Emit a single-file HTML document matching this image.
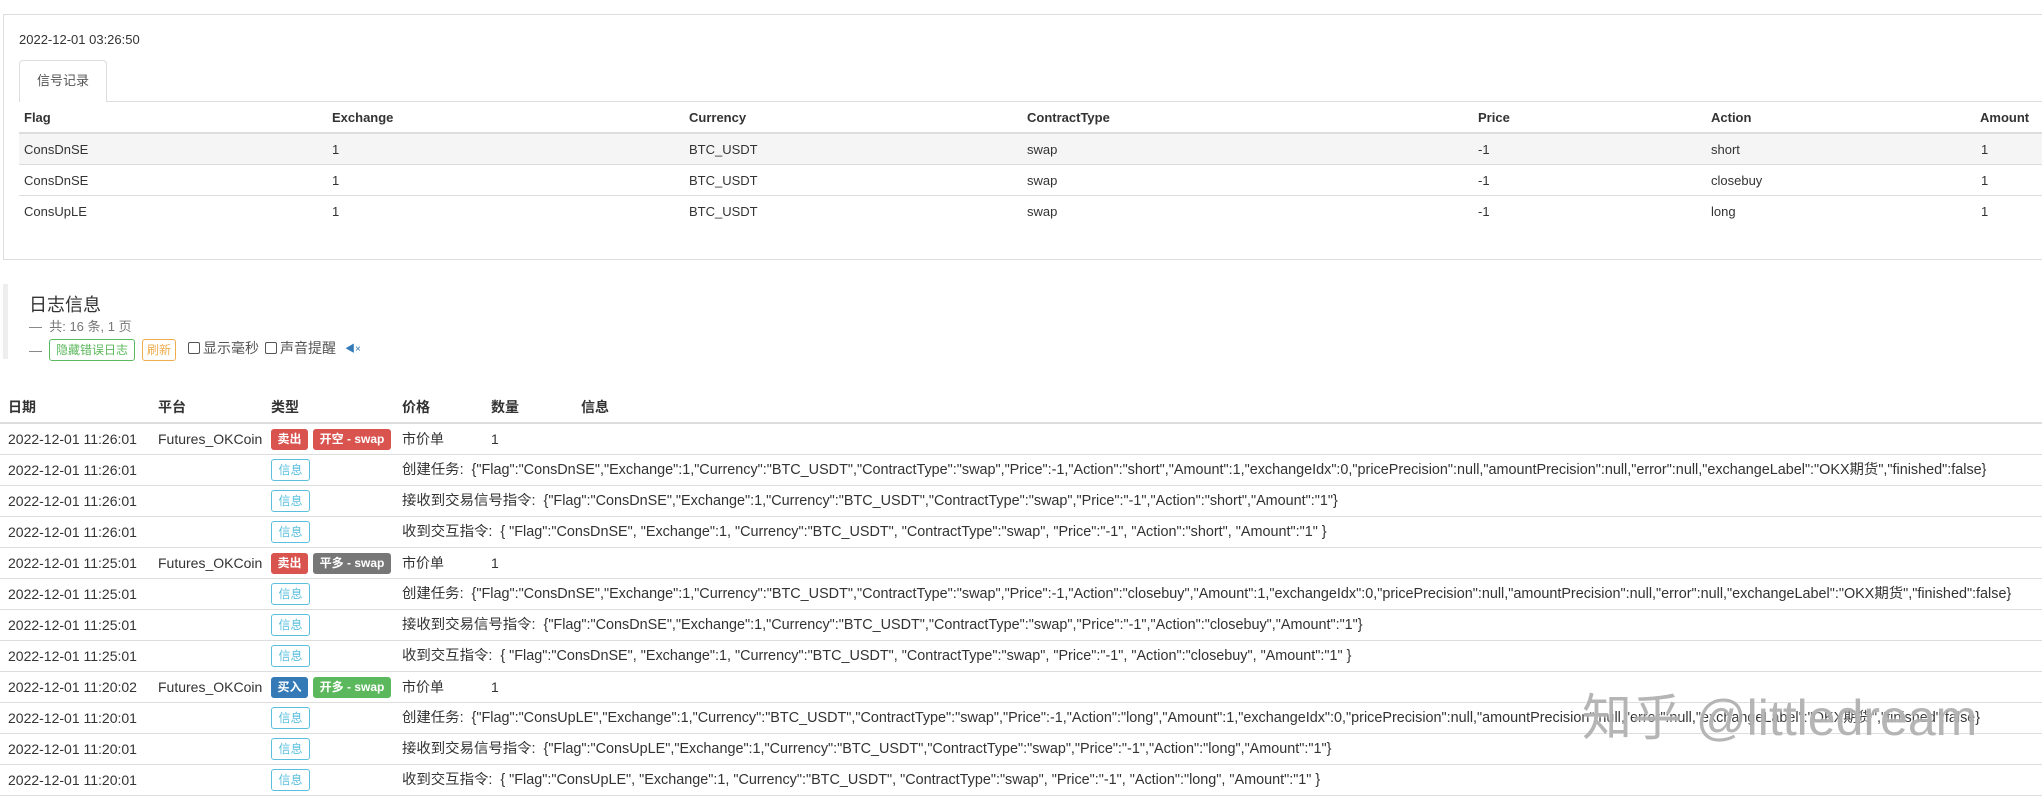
<!DOCTYPE html>
<html><head><meta charset="utf-8"><style>
*{box-sizing:border-box;margin:0;padding:0}
body{width:2042px;height:796px;background:#fff;font-family:"Liberation Sans","Noto Sans CJK SC",sans-serif;font-size:13px;color:#333;position:relative;overflow:hidden}
.abs{position:absolute;white-space:nowrap;line-height:17px}
.lg{font-size:14px}
.msg{font-size:14.4px}
.panel{position:absolute;left:3px;top:14px;width:2045px;height:246px;border:1px solid #ddd;border-right:none}
.tab{position:absolute;left:19px;top:60px;width:88px;height:42px;border:1px solid #ddd;border-bottom:none;border-radius:4px 4px 0 0;background:#fff;color:#555;font-size:13px;text-align:center;line-height:40px}
.hl{position:absolute;height:1px;background:#ddd}
.b{font-weight:bold}
.lbl{position:absolute;height:21px;line-height:21px;border-radius:3px;color:#fff;font-weight:bold;font-size:12px;text-align:center}
.info{position:absolute;height:22px;line-height:20px;border:1px solid #5bc0de;border-radius:3px;color:#5bc0de;font-size:12px;text-align:center;width:39px;left:271px}
</style></head><body>
<div class="panel"></div>
<div class="abs" style="left:19px;top:31px">2022-12-01 03:26:50</div>
<div class="hl" style="left:19px;top:101px;width:2023px"></div>
<div class="tab">信号记录</div>
<div class="abs b" style="left:24px;top:109px">Flag</div>
<div class="abs b" style="left:332px;top:109px">Exchange</div>
<div class="abs b" style="left:689px;top:109px">Currency</div>
<div class="abs b" style="left:1027px;top:109px">ContractType</div>
<div class="abs b" style="left:1478px;top:109px">Price</div>
<div class="abs b" style="left:1711px;top:109px">Action</div>
<div class="abs b" style="left:1980px;top:109px">Amount</div>
<div style="position:absolute;left:19px;top:132px;width:2023px;height:32px;background:#f5f5f5;border-top:2px solid #ddd"></div>
<div class="hl" style="left:19px;top:164px;width:2023px"></div>
<div class="hl" style="left:19px;top:195px;width:2023px"></div>
<div class="abs" style="left:24px;top:141px">ConsDnSE</div><div class="abs" style="left:332px;top:141px">1</div><div class="abs" style="left:689px;top:141px">BTC_USDT</div><div class="abs" style="left:1027px;top:141px">swap</div><div class="abs" style="left:1478px;top:141px">-1</div><div class="abs" style="left:1711px;top:141px">short</div><div class="abs" style="left:1981px;top:141px">1</div>
<div class="abs" style="left:24px;top:172px">ConsDnSE</div><div class="abs" style="left:332px;top:172px">1</div><div class="abs" style="left:689px;top:172px">BTC_USDT</div><div class="abs" style="left:1027px;top:172px">swap</div><div class="abs" style="left:1478px;top:172px">-1</div><div class="abs" style="left:1711px;top:172px">closebuy</div><div class="abs" style="left:1981px;top:172px">1</div>
<div class="abs" style="left:24px;top:203px">ConsUpLE</div><div class="abs" style="left:332px;top:203px">1</div><div class="abs" style="left:689px;top:203px">BTC_USDT</div><div class="abs" style="left:1027px;top:203px">swap</div><div class="abs" style="left:1478px;top:203px">-1</div><div class="abs" style="left:1711px;top:203px">long</div><div class="abs" style="left:1981px;top:203px">1</div>

<div style="position:absolute;left:3px;top:284px;width:5px;height:75px;background:#eee"></div>
<div class="abs" style="left:29px;top:294px;font-size:18px;line-height:22px;color:#333">日志信息</div>
<div class="abs" style="left:29px;top:318px;color:#777">—&nbsp; 共: 16 条, 1 页</div>
<div class="abs" style="left:29px;top:342px;color:#777">—</div>
<div class="abs" style="left:49px;top:339px;height:22px;line-height:20px;border:1px solid #5cb85c;border-radius:3px;color:#5cb85c;font-size:12px;padding:0 6px">隐藏错误日志</div>
<div class="abs" style="left:142px;top:339px;height:22px;line-height:20px;border:1px solid #f0ad4e;border-radius:3px;color:#f0ad4e;font-size:12px;padding:0 4px">刷新</div>
<div class="abs" style="left:188px;top:342px;width:12px;height:12px;border:1px solid #555;border-radius:2px"></div>
<div class="abs" style="left:203px;top:340px;color:#555;font-size:14px">显示毫秒</div>
<div class="abs" style="left:265px;top:342px;width:12px;height:12px;border:1px solid #555;border-radius:2px"></div>
<div class="abs" style="left:280px;top:340px;color:#555;font-size:14px">声音提醒</div>
<div class="abs" style="left:345px;top:341px;color:#337ab7;font-size:10px">◀×</div>

<div class="abs b lg" style="left:8px;top:399px">日期</div>
<div class="abs b lg" style="left:158px;top:399px">平台</div>
<div class="abs b lg" style="left:271px;top:399px">类型</div>
<div class="abs b lg" style="left:402px;top:399px">价格</div>
<div class="abs b lg" style="left:491px;top:399px">数量</div>
<div class="abs b lg" style="left:581px;top:399px">信息</div>
<div style="position:absolute;left:0;top:422px;width:2042px;height:2px;background:#ddd"></div>

<div class="hl" style="left:0;top:454px;width:2042px"></div><div class="hl" style="left:0;top:485px;width:2042px"></div><div class="hl" style="left:0;top:516px;width:2042px"></div><div class="hl" style="left:0;top:547px;width:2042px"></div><div class="hl" style="left:0;top:578px;width:2042px"></div><div class="hl" style="left:0;top:609px;width:2042px"></div><div class="hl" style="left:0;top:640px;width:2042px"></div><div class="hl" style="left:0;top:671px;width:2042px"></div><div class="hl" style="left:0;top:702px;width:2042px"></div><div class="hl" style="left:0;top:733px;width:2042px"></div><div class="hl" style="left:0;top:764px;width:2042px"></div><div class="hl" style="left:0;top:795px;width:2042px"></div>

<div class="abs lg" style="left:8px;top:431px">2022-12-01 11:26:01</div><div class="abs lg" style="left:158px;top:431px">Futures_OKCoin</div>
<div class="lbl" style="left:271px;top:429px;width:37px;background:#d9534f">卖出</div><div class="lbl" style="left:313px;top:429px;width:78px;background:#d9534f">开空 - swap</div>
<div class="abs lg" style="left:402px;top:431px">市价单</div><div class="abs lg" style="left:491px;top:431px">1</div>
<div class="abs lg" style="left:8px;top:462px">2022-12-01 11:26:01</div><div class="info" style="top:459px">信息</div>
<div class="abs msg" style="left:402px;top:462px">创建任务:&nbsp; {"Flag":"ConsDnSE","Exchange":1,"Currency":"BTC_USDT","ContractType":"swap","Price":-1,"Action":"short","Amount":1,"exchangeIdx":0,"pricePrecision":null,"amountPrecision":null,"error":null,"exchangeLabel":"OKX期货","finished":false}</div>
<div class="abs lg" style="left:8px;top:493px">2022-12-01 11:26:01</div><div class="info" style="top:490px">信息</div>
<div class="abs msg" style="left:402px;top:493px">接收到交易信号指令:&nbsp; {"Flag":"ConsDnSE","Exchange":1,"Currency":"BTC_USDT","ContractType":"swap","Price":"-1","Action":"short","Amount":"1"}</div>
<div class="abs lg" style="left:8px;top:524px">2022-12-01 11:26:01</div><div class="info" style="top:521px">信息</div>
<div class="abs msg" style="left:402px;top:524px">收到交互指令:&nbsp; { "Flag":"ConsDnSE", "Exchange":1, "Currency":"BTC_USDT", "ContractType":"swap", "Price":"-1", "Action":"short", "Amount":"1" }</div>
<div class="abs lg" style="left:8px;top:555px">2022-12-01 11:25:01</div><div class="abs lg" style="left:158px;top:555px">Futures_OKCoin</div>
<div class="lbl" style="left:271px;top:553px;width:37px;background:#d9534f">卖出</div><div class="lbl" style="left:313px;top:553px;width:78px;background:#777">平多 - swap</div>
<div class="abs lg" style="left:402px;top:555px">市价单</div><div class="abs lg" style="left:491px;top:555px">1</div>
<div class="abs lg" style="left:8px;top:586px">2022-12-01 11:25:01</div><div class="info" style="top:583px">信息</div>
<div class="abs msg" style="left:402px;top:586px">创建任务:&nbsp; {"Flag":"ConsDnSE","Exchange":1,"Currency":"BTC_USDT","ContractType":"swap","Price":-1,"Action":"closebuy","Amount":1,"exchangeIdx":0,"pricePrecision":null,"amountPrecision":null,"error":null,"exchangeLabel":"OKX期货","finished":false}</div>
<div class="abs lg" style="left:8px;top:617px">2022-12-01 11:25:01</div><div class="info" style="top:614px">信息</div>
<div class="abs msg" style="left:402px;top:617px">接收到交易信号指令:&nbsp; {"Flag":"ConsDnSE","Exchange":1,"Currency":"BTC_USDT","ContractType":"swap","Price":"-1","Action":"closebuy","Amount":"1"}</div>
<div class="abs lg" style="left:8px;top:648px">2022-12-01 11:25:01</div><div class="info" style="top:645px">信息</div>
<div class="abs msg" style="left:402px;top:648px">收到交互指令:&nbsp; { "Flag":"ConsDnSE", "Exchange":1, "Currency":"BTC_USDT", "ContractType":"swap", "Price":"-1", "Action":"closebuy", "Amount":"1" }</div>
<div class="abs lg" style="left:8px;top:679px">2022-12-01 11:20:02</div><div class="abs lg" style="left:158px;top:679px">Futures_OKCoin</div>
<div class="lbl" style="left:271px;top:677px;width:37px;background:#337ab7">买入</div><div class="lbl" style="left:313px;top:677px;width:78px;background:#5cb85c">开多 - swap</div>
<div class="abs lg" style="left:402px;top:679px">市价单</div><div class="abs lg" style="left:491px;top:679px">1</div>
<div class="abs lg" style="left:8px;top:710px">2022-12-01 11:20:01</div><div class="info" style="top:707px">信息</div>
<div class="abs msg" style="left:402px;top:710px">创建任务:&nbsp; {"Flag":"ConsUpLE","Exchange":1,"Currency":"BTC_USDT","ContractType":"swap","Price":-1,"Action":"long","Amount":1,"exchangeIdx":0,"pricePrecision":null,"amountPrecision":null,"error":null,"exchangeLabel":"OKX期货","finished":false}</div>
<div class="abs lg" style="left:8px;top:741px">2022-12-01 11:20:01</div><div class="info" style="top:738px">信息</div>
<div class="abs msg" style="left:402px;top:741px">接收到交易信号指令:&nbsp; {"Flag":"ConsUpLE","Exchange":1,"Currency":"BTC_USDT","ContractType":"swap","Price":"-1","Action":"long","Amount":"1"}</div>
<div class="abs lg" style="left:8px;top:772px">2022-12-01 11:20:01</div><div class="info" style="top:769px">信息</div>
<div class="abs msg" style="left:402px;top:772px">收到交互指令:&nbsp; { "Flag":"ConsUpLE", "Exchange":1, "Currency":"BTC_USDT", "ContractType":"swap", "Price":"-1", "Action":"long", "Amount":"1" }</div>

<div class="abs" style="left:1582px;top:688px;font-size:50px;line-height:60px;color:rgba(150,150,150,0.7);text-shadow:0 0 2px #fff">知乎 @littledream</div>
</body></html>
